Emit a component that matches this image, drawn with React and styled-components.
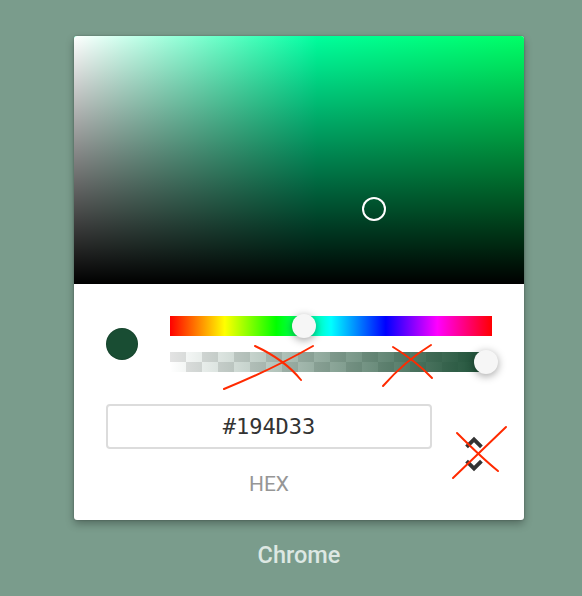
import React from "react";
import styled, { createGlobalStyle } from "styled-components";

const Global = createGlobalStyle`
  html, body { margin: 0; padding: 0; }
  body {
    background: #7a9c8c;
    font-family: Roboto, "Liberation Sans", sans-serif;
    width: 582px;
    height: 596px;
    overflow: hidden;
    position: relative;
  }
`;

const Page = styled.div`
  width: 450px;
  margin-left: 74px;
  padding-top: 36px;
  display: flex;
  flex-direction: column;
  align-items: center;
`;

const Card = styled.div`
  width: 450px;
  background: #fff;
  border-radius: 3px;
  overflow: hidden;
  box-shadow: rgba(0, 0, 0, 0.3) 0 0 2px, rgba(0, 0, 0, 0.3) 0 4px 8px;
`;

const Saturation = styled.div`
  position: relative;
  height: 248px;
  background: linear-gradient(to top, #000, rgba(0, 0, 0, 0)),
    linear-gradient(
      to right,
      #fff 0%,
      rgba(255, 255, 255, 0.55) 25%,
      rgba(255, 255, 255, 0) 54%
    ),
    linear-gradient(to right, hsl(${(p) => p.$hue + 8}, 100%, 50%) 50%, hsl(${(p) => p.$hue - 6}, 100%, 50%));
`;

const SatPointer = styled.div`
  position: absolute;
  width: 24px;
  height: 24px;
  border-radius: 50%;
  transform: translate(-12px, -12px);
  box-shadow: inset 0 0 0 2px #fff, 0 0 1px rgba(0, 0, 0, 0.3);
`;

const Body = styled.div`
  padding: 32px 32px 24px;
`;

const Controls = styled.div`
  display: flex;
  align-items: center;
`;

const SwatchCol = styled.div`
  width: 64px;
  display: flex;
  align-items: center;
`;

const Swatch = styled.div`
  width: 32px;
  height: 32px;
  border-radius: 50%;
  background: ${(p) => p.$color};
  box-shadow: inset 0 0 0 1px rgba(0, 0, 0, 0.1);
`;

const Sliders = styled.div`
  flex: 1;
  display: flex;
  flex-direction: column;
  gap: 16px;
`;

const Track = styled.div`
  position: relative;
  height: 20px;
`;

const HueTrack = styled(Track)`
  background: linear-gradient(
    to right,
    #f00 0%,
    #ff0 17%,
    #0f0 33%,
    #0ff 50%,
    #00f 67%,
    #f0f 83%,
    #f00 100%
  );
`;

const AlphaTrack = styled(Track)`
  background: linear-gradient(to right, rgba(25, 77, 51, 0), rgb(25, 77, 51)),
    repeating-conic-gradient(#fff 0 25%, #e3e3e3 0 50%) 0 0 / 32px 20px;
`;

const Thumb = styled.div`
  position: absolute;
  top: -2px;
  width: 24px;
  height: 24px;
  border-radius: 50%;
  background: #f6f6f6;
  transform: translateX(-12px);
  box-shadow: 0 2px 8px rgba(0, 0, 0, 0.37);
`;

const Fields = styled.div`
  display: flex;
  padding-top: 32px;
`;

const Field = styled.div`
  width: 326px;
  display: flex;
  flex-direction: column;
`;

const Input = styled.input`
  box-sizing: border-box;
  width: 326px;
  height: 45px;
  border: 2px solid #dcdcdc;
  border-radius: 4px;
  outline: none;
  text-align: center;
  font-family: "DejaVu Sans Mono", "Liberation Mono", monospace;
  font-size: 22px;
  color: #333;
  background: #fff;
  padding: 0;
`;

const Label = styled.span`
  margin-top: 23px;
  text-align: center;
  text-transform: uppercase;
  font-size: 21px;
  color: #969696;
`;

const Toggle = styled.div`
  flex: 1;
  display: flex;
  justify-content: flex-end;
  padding-top: 27px;
  margin-right: -5px;
`;

const ToggleIcon = styled.svg`
  width: 46px;
  height: 46px;
  display: block;
`;

const Caption = styled.div`
  margin-top: 21px;
  font-size: 23.5px;
  font-weight: 500;
  color: #dde8e3;
`;

const Scribbles = styled.svg`
  position: absolute;
  left: 0;
  top: 0;
  width: 582px;
  height: 596px;
  pointer-events: none;
`;

const Stroke = styled.path`
  fill: none;
  stroke: #ff2a00;
  stroke-width: 2;
  stroke-linecap: round;
`;

export default function App() {
  const hue = 150;
  const sat = 0.667;
  const val = 0.302;
  const color = "#194D33";
  return (
    <>
      <Global />
      <Page>
        <Card>
          <Saturation $hue={hue}>
            <SatPointer style={{ left: `${sat * 100}%`, top: `${(1 - val) * 100}%` }} />
          </Saturation>
          <Body>
            <Controls>
              <SwatchCol>
                <Swatch $color={color} />
              </SwatchCol>
              <Sliders>
                <HueTrack>
                  <Thumb style={{ left: `${(hue / 360) * 100}%` }} />
                </HueTrack>
                <AlphaTrack>
                  <Thumb style={{ left: "calc(100% - 6px)" }} />
                </AlphaTrack>
              </Sliders>
            </Controls>
            <Fields>
              <Field>
                <Input readOnly value={color} />
                <Label>hex</Label>
              </Field>
              <Toggle>
                <ToggleIcon viewBox="0 0 24 24">
                  <path
                    fill="#333"
                    d="M12,18.17L8.83,15L7.42,16.41L12,21L16.59,16.41L15.17,15M12,5.83L15.17,9L16.58,7.59L12,3L7.41,7.59L8.83,9L12,5.83Z"
                  />
                </ToggleIcon>
              </Toggle>
            </Fields>
          </Body>
        </Card>
        <Caption>Chrome</Caption>
      </Page>
      <Scribbles viewBox="0 0 582 596">
        <Stroke d="M255,346 Q285,360 301,380" />
        <Stroke d="M224,389 Q275,368 313,346" />
        <Stroke d="M393,347 Q416,361 432,378" />
        <Stroke d="M383,386 Q405,361 431,345" />
        <Stroke d="M457,433 Q482,458 498,471" />
        <Stroke d="M453,478 Q480,452 506,427" />
      </Scribbles>
    </>
  );
}
